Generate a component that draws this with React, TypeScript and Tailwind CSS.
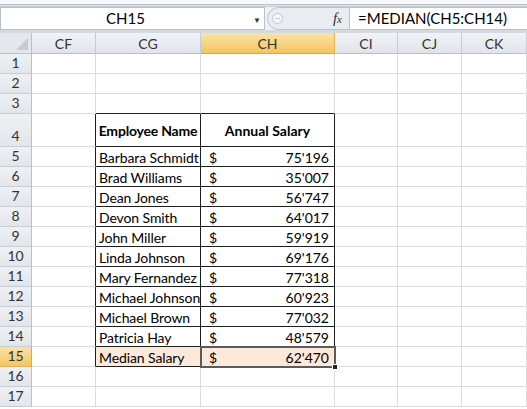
import React from 'react';

const cols = [
  { id: 'CF', w: 'w-[64px]' },
  { id: 'CG', w: 'w-[105px]' },
  { id: 'CH', w: 'w-[134px]' },
  { id: 'CI', w: 'w-[63px]' },
  { id: 'CJ', w: 'w-[64px]' },
  { id: 'CK', w: 'flex-1' },
];

const people: [string, string][] = [
  ['Barbara Schmidt', "75'196"],
  ['Brad Williams', "35'007"],
  ['Dean Jones', "56'747"],
  ['Devon Smith', "64'017"],
  ['John Miller', "59'919"],
  ['Linda Johnson', "69'176"],
  ['Mary Fernandez', "77'318"],
  ['Michael Johnson', "60'923"],
  ['Michael Brown', "77'032"],
  ['Patricia Hay', "48'579"],
  ['Median Salary', "62'470"],
];

const rows = Array.from({ length: 17 }, (_, i) => i + 1);

const Cell = ({ row, col }: { row: number; col: number }) => {
  const inTable = row >= 4 && row <= 15 && (col === 1 || col === 2);
  const rightDark = inTable || (col === 0 && row >= 4 && row <= 15);
  const bottomDark = inTable || (row === 3 && (col === 1 || col === 2));
  const fill = row === 15 && inTable ? 'bg-[#fde9d9]' : 'bg-white';
  const rb = rightDark ? 'border-r-[#1e1e1e]' : 'border-r-[#dadcdd]';
  const bb = bottomDark ? 'border-b-[#1e1e1e]' : 'border-b-[#dadcdd]';
  const base = `${cols[col].w} h-full border-r border-b ${rb} ${bb} ${fill} flex items-center overflow-hidden whitespace-nowrap`;

  if (row === 4 && col === 1) {
    return <div className={`${base} justify-center font-bold tracking-[-0.2px]`}>Employee Name</div>;
  }
  if (row === 4 && col === 2) {
    return <div className={`${base} justify-center font-bold`}>Annual Salary</div>;
  }
  if (row >= 5 && row <= 15 && col === 1) {
    return <div className={`${base} pl-[3px] pt-[2px] tracking-[-0.1px]`}>{people[row - 5][0]}</div>;
  }
  if (row >= 5 && row <= 15 && col === 2) {
    return (
      <div className={`${base} justify-between pl-[8px] pr-[5px] pt-[2px]`}>
        <span>$</span>
        <span>{people[row - 5][1]}</span>
      </div>
    );
  }
  return <div className={base} />;
};

export default function App() {
  return (
    <div className="w-[527px] h-[409px] overflow-hidden bg-white text-[14px] text-black font-[Lato,sans-serif] relative">
      {/* toolbar remnant */}
      <div className="h-[5px] bg-[#f7f8fa] border-b border-[#b9c0c9]" />
      <div className="h-[2px] bg-[#dfe4ea] border-b border-[#c9cfd7]" />

      {/* formula bar */}
      <div className="h-[26px] flex items-stretch bg-[#eef1f5] border-b-[3px] border-[#d3d9e0]">
        <div className="w-[265px] bg-white border border-[#b8c2cd] flex items-center relative">
          <span className="flex-1 text-center pr-[14px] text-[15px]">CH15</span>
          <span className="absolute right-[3px] top-[6px] text-[8px] text-[#333]">▼</span>
        </div>
        <div className="w-[83px] ml-[2px] flex items-center bg-[#e9edf1] border border-[#b8c2cd] rounded-l-full">
          <div className="ml-[4px] w-[11px] h-[11px] rounded-full border border-[#c2c8cf] bg-[#f4f6f8] flex items-center justify-center">
            <div className="w-[5px] h-[1px] bg-[#c2c8cf]" />
          </div>
          <span className="ml-auto mr-[7px] font-['Liberation_Serif',serif] italic text-[15px] text-[#333]">
            f<span className="text-[11px]">x</span>
          </span>
        </div>
        <div className="flex-1 bg-white border-y border-[#b8c2cd] flex items-center pl-[8px] text-[15px]">
          =MEDIAN(CH5:CH14)
        </div>
      </div>

      {/* column headers */}
      <div className="h-[21px] flex text-[#333]">
        <div className="w-[32px] h-full bg-[#e4e8ed] border-r border-b border-[#b9c0c8] flex items-end justify-end p-[3px]">
          <div className="w-0 h-0 border-l-[12px] border-l-transparent border-b-[12px] border-b-[#c7ccd2]" />
        </div>
        {cols.map((c) =>
          c.id === 'CH' ? (
            <div key={c.id} className={`${c.w} h-full bg-gradient-to-b from-[#fbe2a6] to-[#f3c55e] border-r border-b border-r-[#e1b25a] border-b-[#e0a53c] flex items-center justify-center`}>
              {c.id}
            </div>
          ) : (
            <div key={c.id} className={`${c.w} h-full bg-gradient-to-b from-[#f1f3f6] to-[#e0e4e9] border-r border-b border-r-[#c5cbd2] border-b-[#b9c0c8] flex items-center justify-center`}>
              {c.id}
            </div>
          )
        )}
      </div>

      {/* rows */}
      {rows.map((r) => (
        <div key={r} className={`flex ${r === 4 ? 'h-[33px]' : 'h-[20px]'}`}>
          {r === 15 ? (
            <div className="w-[32px] h-full bg-gradient-to-b from-[#fbe2a6] to-[#f3c55e] border-r border-b border-r-[#e0a53c] border-b-[#e1b25a] flex items-end justify-center text-[#333]">
              {r}
            </div>
          ) : (
            <div className="w-[32px] h-full bg-gradient-to-b from-[#eef1f4] to-[#e2e6eb] border-r border-b border-r-[#b9c0c8] border-b-[#c9ced5] flex items-end justify-center text-[#333]">
              {r}
            </div>
          )}
          {cols.map((c, ci) => (
            <Cell key={c.id} row={r} col={ci} />
          ))}
        </div>
      ))}

      {/* selection of CH15 */}
      <div className="absolute left-[200px] top-[346px] w-[136px] h-[22px] border-2 border-[#5b5b5b] pointer-events-none" />
      <div className="absolute left-[332px] top-[364px] w-[6px] h-[6px] bg-[#222] border border-white pointer-events-none" />
    </div>
  );
}
